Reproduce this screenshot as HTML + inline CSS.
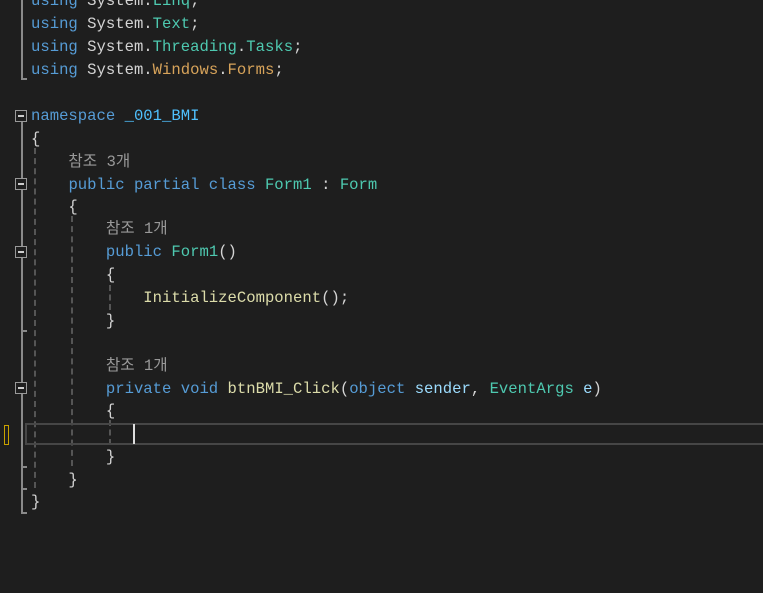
<!DOCTYPE html>
<html><head><style>
body{margin:0;width:763px;height:593px;background:#1e1e1e;overflow:hidden;position:relative;font-family:"Liberation Mono","Noto Sans CJK KR",monospace;font-size:15.6px;color:#d4d4d4}
.l{position:absolute;left:31px;white-space:pre;line-height:22px;height:22px;margin-top:2px}
.k{color:#569cd6}.t{color:#4ec9b0}.y{color:#dcdcaa}.o{color:#d7a35a}.c{color:#4fc1ff}.v{color:#9cdcfe}.g{color:#999}
.fb{position:absolute;left:15px;width:10px;height:10px;border:1px solid #999;background:#1e1e1e}
.fb:after{content:"";position:absolute;left:2px;top:4px;width:6px;height:2px;background:#ccc}
.vl{position:absolute;width:2px;background:#8a8a8a}
.hl{position:absolute;height:2px;background:#8a8a8a;width:6px}
.d{position:absolute;width:0;border-left:2px dashed #555}
</style></head><body>
<div class="vl" style="left:21px;top:0;height:80px"></div><div class="hl" style="left:21px;top:78px"></div>
<div class="vl" style="left:21px;top:122px;height:392px"></div><div class="hl" style="left:21px;top:512px"></div>
<div class="hl" style="left:21px;top:330px"></div><div class="hl" style="left:21px;top:466px"></div><div class="hl" style="left:21px;top:488px"></div>
<div class="d" style="left:34px;top:148px;height:340px"></div>
<div class="d" style="left:71px;top:216px;height:250px"></div>
<div class="d" style="left:109px;top:285px;height:25px"></div>
<div class="d" style="left:109px;top:420px;height:25px"></div>
<div class="fb" style="top:110px"></div>
<div class="fb" style="top:178px"></div>
<div class="fb" style="top:246px"></div>
<div class="fb" style="top:382px"></div>
<div style="position:absolute;left:25px;top:423px;width:740px;height:18px;border:2px solid #464646"></div>
<div style="position:absolute;left:4px;top:425px;width:3px;height:18px;border:1px solid #c8a100"></div>
<div style="position:absolute;left:133px;top:424px;width:2px;height:20px;background:#ddd"></div>
<div class="l" style="top:-12px"><span class="k">using</span> System.<span class="t">Linq</span>;</div>
<div class="l" style="top:11px"><span class="k">using</span> System.<span class="t">Text</span>;</div>
<div class="l" style="top:34px"><span class="k">using</span> System.<span class="t">Threading</span>.<span class="t">Tasks</span>;</div>
<div class="l" style="top:57px"><span class="k">using</span> System.<span class="o">Windows</span>.<span class="o">Forms</span>;</div>
<div class="l" style="top:103px"><span class="k">namespace</span> <span class="c">_001_BMI</span></div>
<div class="l" style="top:126px">{</div>
<div class="l g" style="top:149px">    참조 3개</div>
<div class="l" style="top:172px">    <span class="k">public partial class</span> <span class="t">Form1</span> : <span class="t">Form</span></div>
<div class="l" style="top:194px">    {</div>
<div class="l g" style="top:216px">        참조 1개</div>
<div class="l" style="top:239px">        <span class="k">public</span> <span class="t">Form1</span>()</div>
<div class="l" style="top:262px">        {</div>
<div class="l" style="top:285px">            <span class="y">InitializeComponent</span>();</div>
<div class="l" style="top:308px">        }</div>
<div class="l g" style="top:353px">        참조 1개</div>
<div class="l" style="top:376px">        <span class="k">private void</span> <span class="y">btnBMI_Click</span>(<span class="k">object</span> <span class="v">sender</span>, <span class="t">EventArgs</span> <span class="v">e</span>)</div>
<div class="l" style="top:398px">        {</div>
<div class="l" style="top:444px">        }</div>
<div class="l" style="top:467px">    }</div>
<div class="l" style="top:489px">}</div>
</body></html>
